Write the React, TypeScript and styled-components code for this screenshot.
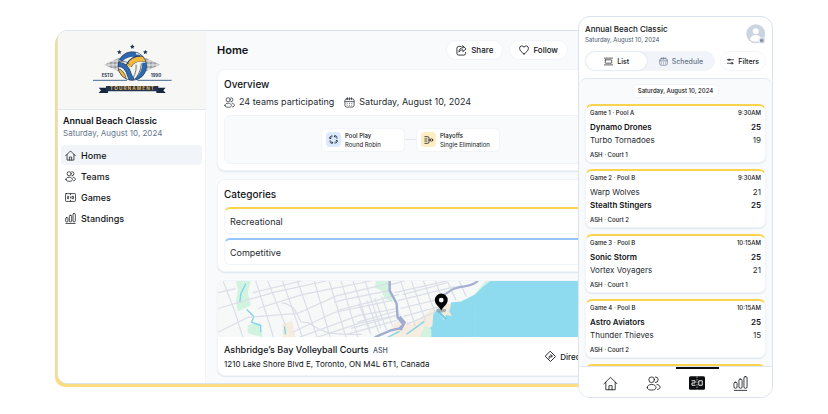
import React from "react";
import styled, { createGlobalStyle, css } from "styled-components";

const color = {
  ink: "#111418",
  body: "#272b30",
  slate: "#64748b",
  line: "#e2e8f0",
  soft: "#f1f5f9",
  canvas: "#f8fafc",
  yellow: "#fcd34d",
  blue: "#93c5fd",
};

const GlobalStyle = createGlobalStyle`
  *, *::before, *::after { box-sizing: border-box; }
  body { margin: 0; background: #fff; color: ${color.ink}; font-family: Inter, sans-serif; }
  h1, h2, h3, p, ul { margin: 0; padding: 0; }
  ul { list-style: none; }
  button { font: inherit; color: inherit; }
  a { color: inherit; text-decoration: none; }
  svg { display: block; flex: none; }
`;

const Stage = styled.div`
  display: flex;
  align-items: stretch;
  min-height: 100vh;
  padding: 16px 55px 16px 57px;
`;

/* ---------- desktop window ---------- */

const Desktop = styled.div`
  display: flex;
  flex: 1;
  min-width: 0;
  margin: 14px -38px 14px 0;
  border: 1px solid #dbe3ee;
  border-radius: 10px;
  background: ${color.canvas};
  box-shadow: -2px 3px 0 #fcdb83;
  overflow: hidden;
`;

const Sidebar = styled.aside`
  flex: 0 0 148px;
  background: #fff;
  border-right: 1px solid ${color.soft};
`;

const LogoPanel = styled.div`
  display: flex;
  justify-content: center;
  align-items: center;
  height: 79px;
  padding-top: 2px;
  background: #f7f7f6;
  border-bottom: 1px solid ${color.line};
`;

const SidebarHeading = styled.div`
  padding: 5px 5px 6px;
`;

const EventName = styled.h1<{ $compact?: boolean }>`
  font-size: ${(p) => (p.$compact ? 8 : 9)}px;
  font-weight: ${(p) => (p.$compact ? 500 : 600)};
  line-height: 12px;
  white-space: nowrap;
`;

const EventDate = styled.p<{ $compact?: boolean }>`
  font-size: ${(p) => (p.$compact ? 6 : 8)}px;
  line-height: ${(p) => (p.$compact ? 10 : 12)}px;
  color: ${(p) => (p.$compact ? "#475569" : color.slate)};
  white-space: nowrap;
`;

const SideList = styled.ul`
  display: grid;
  gap: 1px;
  padding: 0 3px;
`;

const SideLink = styled.a<{ $active?: boolean }>`
  display: flex;
  align-items: center;
  gap: 5px;
  height: 20px;
  padding: 0 4px;
  border-radius: 4px;
  font-size: 9px;
  font-weight: 500;
  background: ${(p) => (p.$active ? color.soft : "transparent")};
`;

const Main = styled.main`
  flex: 1;
  min-width: 0;
  padding: 0 11px 7px;
  display: flex;
  flex-direction: column;
  gap: 8px;
`;

const MainHeader = styled.header`
  display: flex;
  align-items: center;
  gap: 6px;
  height: 38px;
  margin-bottom: -8px;
  padding-right: 36px;
`;

const PageTitle = styled.h2`
  flex: 1;
  font-size: 11px;
  font-weight: 600;
`;

const PillButton = styled.button<{ $small?: boolean }>`
  display: flex;
  align-items: center;
  justify-content: center;
  gap: 4px;
  height: 20px;
  padding: 0 ${(p) => (p.$small ? 6 : 9)}px;
  border: 1px solid ${color.soft};
  border-radius: 10px;
  background: #fff;
  font-size: ${(p) => (p.$small ? 7 : 8)}px;
  font-weight: 500;
`;

const Card = styled.section`
  border: 1px solid ${color.soft};
  border-radius: 8px;
  background: #fff;
  box-shadow: 0 1px 1px #e2e8f0;
  overflow: hidden;
`;

const CardBody = styled.div`
  padding: 6px;
`;

const CardTitle = styled.h3`
  font-size: 10px;
  font-weight: 500;
  line-height: 16px;
`;

const Facts = styled.div`
  display: flex;
  gap: 10px;
  padding: 4px 0 7px;
`;

const Fact = styled.p`
  display: flex;
  align-items: center;
  gap: 4px;
  font-size: 9px;
  line-height: 12px;
  color: ${color.body};
  white-space: nowrap;
`;

const Bracket = styled.div`
  display: flex;
  align-items: center;
  justify-content: center;
  height: 49px;
  border: 1px solid ${color.soft};
  border-radius: 6px;
  background: ${color.canvas};
`;

const Connector = styled.span`
  width: 11px;
  height: 1px;
  background: ${color.line};
`;

const StageBox = styled.div`
  display: flex;
  align-items: center;
  gap: 4px;
  height: 24px;
  min-width: 84px;
  padding: 0 4px;
  border: 1px solid ${color.soft};
  border-radius: 5px;
  background: #fff;
`;

const StageIcon = styled.span<{ $tint: string }>`
  display: grid;
  place-items: center;
  width: 15px;
  height: 15px;
  border-radius: 4px;
  background: ${(p) => p.$tint};
`;

const StageText = styled.p<{ $strong?: boolean }>`
  font-size: 6px;
  line-height: 9px;
  font-weight: ${(p) => (p.$strong ? 500 : 400)};
  white-space: nowrap;
`;

const CategoryList = styled.div`
  display: grid;
  gap: 4px;
  padding-top: 5px;
`;

const Category = styled.a<{ $accent: string }>`
  display: flex;
  align-items: center;
  height: 27px;
  padding: 0 5px;
  border: 1px solid ${color.soft};
  border-top: 2px solid ${(p) => p.$accent};
  border-radius: 6px;
  font-size: 9px;
  color: ${color.body};
`;

const MapFrame = styled.div`
  height: 56px;
  svg { width: 100%; height: 100%; }
`;

const Venue = styled.div`
  display: flex;
  align-items: center;
  justify-content: space-between;
  padding: 6px 4px 5px 6px;
  white-space: nowrap;
`;

const VenueName = styled.h3`
  font-size: 9px;
  font-weight: 500;
  line-height: 14px;
`;

const VenueCode = styled.span`
  margin-left: 2px;
  font-size: 7px;
  color: #475569;
`;

const VenueAddress = styled.p`
  font-size: 8px;
  line-height: 12px;
`;

const Directions = styled.a`
  display: flex;
  align-items: center;
  gap: 4px;
  font-size: 8px;
  font-weight: 500;
`;

/* ---------- phone ---------- */

const Phone = styled.div`
  position: relative;
  z-index: 1;
  display: flex;
  flex-direction: column;
  flex: 0 0 195px;
  height: calc(100vh - 32px);
  border: 1px solid #dbe3ee;
  border-radius: 12px;
  background: #fff;
  overflow: hidden;
`;

const PhoneHeader = styled.header`
  padding: 6px 6px 7px;
`;

const PhoneTop = styled.div`
  display: flex;
  align-items: center;
  justify-content: space-between;
  margin-bottom: 6px;
`;

const Controls = styled.div`
  display: flex;
  gap: 5px;
`;

const Segments = styled.div`
  display: flex;
  flex: 1;
  height: 20px;
  padding: 1px;
  border-radius: 10px;
  background: ${color.soft};
`;

const Segment = styled.button<{ $on?: boolean }>`
  display: flex;
  flex: 1 0 auto;
  align-items: center;
  justify-content: center;
  gap: 4px;
  padding: 0 8px;
  border: 0;
  border-radius: 9px;
  background: transparent;
  color: ${color.slate};
  font-size: 7px;
  font-weight: 500;
  ${(p) =>
    p.$on &&
    css`
      padding: 0 15px;
      background: #fff;
      color: ${color.ink};
      box-shadow: 0 0 2px #cbd5e1;
    `}
`;

const Feed = styled.div`
  display: flex;
  flex: 1;
  min-height: 0;
  flex-direction: column;
  align-items: center;
  gap: 6px;
  padding: 5px 6px 0;
  border-top: 1px solid ${color.line};
  border-radius: 8px 8px 0 0;
  background: ${color.canvas};
  overflow: hidden;
`;

const DayPill = styled.p`
  flex: none;
  padding: 0 5px;
  border: 1px solid ${color.soft};
  border-radius: 6px;
  background: #fff;
  font-size: 6px;
  font-weight: 500;
  line-height: 12px;
`;

const GameCard = styled.article`
  display: grid;
  flex: none;
  gap: 3px;
  width: 100%;
  min-height: 59px;
  padding: 2px 4px;
  border: 1px solid ${color.soft};
  border-top: 2px solid ${color.yellow};
  border-radius: 7px;
  background: #fff;
  box-shadow: 0 1px 1px #e2e8f0;
`;

const GameMeta = styled.p`
  display: flex;
  justify-content: space-between;
  font-size: 6px;
  font-weight: 500;
  line-height: 10px;
`;

const TeamRow = styled.p<{ $winner: boolean }>`
  display: flex;
  justify-content: space-between;
  font-size: 8px;
  line-height: 13px;
  font-weight: ${(p) => (p.$winner ? 600 : 400)};
  color: ${(p) => (p.$winner ? color.ink : color.body)};
`;

const TabBar = styled.nav`
  display: grid;
  grid-template-columns: repeat(4, 1fr);
  height: 31px;
  padding: 0 10px;
  border-top: 1px solid ${color.line};
  background: #fff;
`;

const Tab = styled.a<{ $active?: boolean }>`
  display: grid;
  place-items: center;
  border-top: 2px solid ${(p) => (p.$active ? "#0b0d10" : "transparent")};
`;

/* ---------- icons ---------- */

type IconProps = { size?: number; weight?: number };

const Icon = ({ size = 11, weight = 1.6, children }: IconProps & { children: React.ReactNode }) => (
  <svg width={size} height={size} viewBox="0 0 24 24" fill="none" stroke="currentColor"
    strokeWidth={weight} strokeLinecap="round" strokeLinejoin="round" aria-hidden="true">
    {children}
  </svg>
);

const HomeIcon = (p: IconProps) => (
  <Icon {...p}><path d="M1.5 12.500 12 2l10.500 10.500M4.500 10v12h15V10M9.500 22v-6.500h5V22" /></Icon>
);
const TeamsIcon = (p: IconProps) => (
  <Icon {...p}>
    <circle cx="9" cy="6" r="4.500" />
    <path d="M15 1.500a4.500 4.500 0 0 1 0 9M2 18.500c0-3 3-5 7-5s7 2 7 5-3 4-7 4-7-1-7-4ZM17.500 13.500c3 .5 5 2 5 4.500s-1.500 3-4 3.500" />
  </Icon>
);
const ScoreIcon = (p: IconProps) => (
  <Icon {...p}>
    <rect x="1" y="3.500" width="22" height="17" rx="1.500" />
    <path d="M12 4v2M12 11v2M12 18v2M5.500 9.500H8V12H5.500v2.500H8M16 9.500h2.500v5H16Z" />
  </Icon>
);
const ScoreSolidIcon = () => (
  <svg width="16" height="14" viewBox="0 0 32 28" fill="none" stroke="#fff" strokeWidth="1.800" aria-hidden="true">
    <rect width="32" height="27" y=".5" rx="3" fill="#0b0d10" stroke="none" />
    <path d="M5 9.500h7v4.500H6v4.500h7M19.500 9.500h7v9h-7Z" />
    <path d="M16 1v26" strokeDasharray="3 2" strokeWidth="1.200" />
  </svg>
);
const BarsIcon = (p: IconProps) => (
  <Icon {...p}>
    <rect x="1.500" y="10" width="5" height="9.500" rx="2" />
    <rect x="9.500" y="5" width="5" height="14.500" rx="2" />
    <rect x="17.500" y="1" width="5" height="18.500" rx="2" />
    <path d="M2 23h20" />
  </Icon>
);
const CalendarIcon = (p: IconProps) => (
  <Icon {...p}>
    <rect x="2" y="4" width="20" height="18" rx="4" />
    <path d="M2 10h20M7.500 1.500V6M12 1.500V6M16.500 1.500V6M7 14h.1M12 14h.1M17 14h.1M7 18h.1M12 18h.1M17 18h.1" />
  </Icon>
);
const ShareIcon = () => (
  <Icon size={11} weight={1.800}>
    <path d="M11 3H6a4 4 0 0 0-4 4v11a4 4 0 0 0 4 4h11a4 4 0 0 0 4-4v-2" />
    <path d="M15 2l7 6.500-7 6v-4c-4 0-6.500 1-8.500 5 0-6 3-9.500 8.500-9.500Z" />
  </Icon>
);
const HeartIcon = () => (
  <Icon size={10} weight={2}>
    <path d="M12 21.500C6 17 1.500 13 1.500 8.500a5.500 5.500 0 0 1 10.500-3 5.500 5.500 0 0 1 10.500 3C22.500 13 18 17 12 21.500Z" />
  </Icon>
);
const PoolIcon = () => (
  <Icon size={9} weight={2}>
    <path d="M3 9V6a3 3 0 0 1 3-3h3M15 3h3a3 3 0 0 1 3 3v3M21 15v3a3 3 0 0 1-3 3h-3M9 21H6a3 3 0 0 1-3-3v-3M1 7l2 3 3-2M17 1l-3 2 2 3M23 17l-2-3-3 2M7 23l3-2-2-3" />
  </Icon>
);
const PlayoffIcon = () => (
  <Icon size={10} weight={1.800}>
    <path d="M2 4h7a3 3 0 0 1 3 3v10a3 3 0 0 1-3 3H2M2 9.500h5M2 14.500h5M12 12h3" />
    <circle cx="18" cy="12" r="3" />
  </Icon>
);
const DirectionsIcon = () => (
  <Icon size={11} weight={2}>
    <path d="m12 1 11 11-11 11L1 12ZM9 16v-3a2 2 0 0 1 2-2h4M13 8l3 3-3 3" />
  </Icon>
);
const ListIcon = () => (
  <Icon size={9} weight={1.800}>
    <path d="M1 3h22M1 21h22" /><rect x="3.500" y="7.500" width="17" height="9" rx="1" />
  </Icon>
);
const FiltersIcon = () => (
  <Icon size={7} weight={2.400}>
    <path d="M10 6h13M1 18h13M1 6h3" /><circle cx="7" cy="6" r="3" /><circle cx="17" cy="18" r="3" />
  </Icon>
);

const Avatar = () => (
  <svg width="20" height="20" viewBox="0 0 40 40" role="img" aria-label="Profile">
    <circle cx="19.500" cy="19.500" r="19" fill="#cbd5e1" />
    <circle cx="19.500" cy="14.500" r="6" fill="#fff" />
    <path d="M8 31c1-6 5-9 11.500-9S30 25 31 31c-6 6-17 6-23 0Z" fill="#fff" />
    <rect x="25" y="27" width="13" height="12" rx="3" fill="#e2e8f0" />
    <path d="M28 30.500h7M28 33h7M28 35.500h7" stroke="#64748b" strokeWidth="1.600" />
  </svg>
);

const star = "m0-7 2 4.600 5 .5-3.700 3.400 1.100 4.900L0 4-4.400 6.400l1.100-4.900L-7-1.900l5-.5Z";

const Logo = () => (
  <svg width="92" height="66" viewBox="0 0 276 198" role="img" aria-label="Tournament crest">
    <defs>
      <pattern id="mesh" width="4" height="4" patternUnits="userSpaceOnUse">
        <rect width="3" height="2.500" fill="#777b82" />
      </pattern>
      <clipPath id="ball"><circle cx="139" cy="84" r="43" /></clipPath>
    </defs>
    <g fill="#1f3350">
      <path d={star} transform="translate(100 42)" />
      <path d={star} transform="translate(139 26)" />
      <path d={star} transform="translate(178 42)" />
    </g>
    <path d="M54 80 104 57v46ZM223 80l-50-23v46Z" fill="url(#mesh)" />
    <g clipPath="url(#ball)">
      <circle cx="139" cy="84" r="43" fill="#f5f2e9" />
      <g fill="none" strokeLinecap="butt">
        <path d="M101 66c14-17 38-24 62-12" stroke="#2f69ad" strokeWidth="17" />
        <path d="M150 45c14 1 24 7 31 18" stroke="#f5f2e9" strokeWidth="8" />
        <path d="M128 84c8-18 28-25 54-21" stroke="#22385c" strokeWidth="18" />
        <path d="M128 85c8-18 28-25 54-21" stroke="#f2b83f" strokeWidth="14" />
        <path d="M176 74c1 20-7 38-24 54" stroke="#2f69ad" strokeWidth="15" />
        <path d="M166 76c-1 20-9 36-24 54" stroke="#22385c" strokeWidth="2" />
        <path d="M150 80c2 16-3 32-13 46" stroke="#22385c" strokeWidth="2" />
        <path d="M94 80c22-3 31 14 36 30 2 8 5 12 10 18" stroke="#22385c" strokeWidth="15" />
        <path d="M94 80c22-3 31 14 36 30 2 8 5 12 10 18" stroke="#2f69ad" strokeWidth="12" />
        <path d="M94 98c10 3 16 9 21 26" stroke="#22385c" strokeWidth="15" />
        <path d="M94 98c10 3 16 9 21 26" stroke="#f2b83f" strokeWidth="12" />
        <path d="M98 71c10-3 22-2 32 8" stroke="#22385c" strokeWidth="2" />
      </g>
    </g>
    <circle cx="139" cy="84" r="43" fill="none" stroke="#22385c" strokeWidth="2" />
    <path d="M21 127h102M154 127h103" stroke="#274e7f" strokeWidth="2.500" />
    <g fontFamily="Inter, sans-serif" fontWeight="700" fontSize="13" fill="#253650">
      <text x="47" y="117">ESTD</text>
      <text x="194" y="117">1990</text>
    </g>
    <path d="M38 149h28v16H38l7-8ZM239 149h-28v16h28l-7-8Z" fill="#18283f" />
    <path d="M60 144h157v16H60Z" fill="#22344f" />
    <text x="138" y="157" textAnchor="middle" fontFamily="Inter, sans-serif" fontWeight="700" fontSize="14" fill="#e5b654">T O U R N A M E N T</text>
  </svg>
);

const VenueMap = () => (
  <svg viewBox="0 0 388 57" preserveAspectRatio="xMidYMid slice" role="img" aria-label="Map of the venue area">
    <rect width="388" height="57" fill="#f7f8f8" />
    <g fill="#d2f3e0">
      <path d="M18 0h15l-3 12 3 13-13 6-2-10 2-12ZM30 45l12-3 3 15-15-4Z" />
      <path d="M159 0h14l3 22-8-4-3-8-7-3ZM270 0h10l-17 24-8-6Z" />
    </g>
    <path d="m65 43 10-2 3 16H65ZM178 42l10-2 7 4 24-18 8 4-10 16-8 11h-35Z" fill="#f6ece0" />
    <path d="M28 3 23 13l-1 9M29 29l7 7-2 6 9 3v7M67 46l1 8M171 57l12-6M190 54l18-13" fill="none" stroke="#7fd4eb" strokeWidth="1.400" />
    <g fill="none" stroke="#dadee7" strokeWidth="1.200">
      <path d="M0 28 55 12 110 0M0 52l30-15 50-4 40-18 52-12M0 12l18-4M35 12l50-12M40 28l45-14 70-14M75 52l42-20 58-12M82 57l60-22 39-7M100 57l42-14 42-9" />
      <path d="m5 0 12 31 8 26M38 0l18 57M50 0l18 45M65 0l20 57M80 0l20 57M97 0l16 57M112 0l17 57M124 0l17 57M136 0l17 50M148 0l16 48" />
      <path d="m117 22 10-3 45-9M120 30l62-16M85 42c15-2 5 14 60 12M64 22c12 2 14 8 20 20" />
      <path d="m130 54 50-14M134 48l46-13M140 42l42-12M150 20l12 32M158 18l12 32M165 16l11 30M142 23l12 31" />
      <path d="m174 4 88-24M178 12l72-16M181 20l58-14M184 28l45-11M187 36l40-11M190 44l28-12M184 0l15 46M195 0l14 40M207 0l12 33M219 0l10 27M231 0l9 20M243 0l7 16M186 14l45-12" />
    </g>
    <path d="M173 0v10l7 13 1 14 6 7-4 4-9 2-16 7M183 36l5 6-4 8" fill="none" stroke="#9fabcf" strokeWidth="2.400" />
    <path d="M262 0c-8 8-18 4-26 9l-11 7" fill="none" stroke="#a5b0d2" strokeWidth="2.200" />
    <path d="M275 0h113v57H205l4-7 7-4 1-12 6-8 8 6 4-10 10-1 14-7 8-8Z" fill="#8edaef" />
    <path d="m203 57 6-12 6 4v8Z" fill="#d2f3e0" />
    <path d="m221 31 7 9 2-6 6 2-3-5 2-7-9-2Z" fill="#f3ead8" />
    <path d="m222 31 8 8" stroke="#62cdea" strokeWidth="2" />
    <path d="M259 20v37" stroke="#a6e1f0" strokeDasharray="1 2" />
    <ellipse cx="225" cy="30" rx="5" ry="2" fill="#79899a" opacity=".6" />
    <path d="M225 30c-2-4-6.500-6-6.500-10.500a6.500 6.500 0 0 1 13 0C231.500 24 227 26 225 30Z" fill="#050607" />
    <circle cx="225" cy="19.500" r="2.400" fill="#fff" />
  </svg>
);

/* ---------- data ---------- */

const sideItems = [
  { label: "Home", icon: HomeIcon, active: true },
  { label: "Teams", icon: TeamsIcon },
  { label: "Games", icon: ScoreIcon },
  { label: "Standings", icon: BarsIcon },
];

const games = [
  { title: "Game 1 · Pool A", time: "9:30AM", teams: [["Dynamo Drones", 25], ["Turbo Tornadoes", 19]], court: "ASH · Court 1" },
  { title: "Game 2 · Pool B", time: "9:30AM", teams: [["Warp Wolves", 21], ["Stealth Stingers", 25]], court: "ASH · Court 2" },
  { title: "Game 3 · Pool B", time: "10:15AM", teams: [["Sonic Storm", 25], ["Vortex Voyagers", 21]], court: "ASH · Court 1" },
  { title: "Game 4 · Pool B", time: "10:15AM", teams: [["Astro Aviators", 25], ["Thunder Thieves", 15]], court: "ASH · Court 2" },
];

const DesktopWindow = () => (
  <Desktop>
    <Sidebar>
      <LogoPanel><Logo /></LogoPanel>
      <SidebarHeading>
        <EventName>Annual Beach Classic</EventName>
        <EventDate>Saturday, August 10, 2024</EventDate>
      </SidebarHeading>
      <nav>
        <SideList>
          {sideItems.map(({ label, icon: Glyph, active }) => (
            <li key={label}>
              <SideLink href="#" $active={active}><Glyph />{label}</SideLink>
            </li>
          ))}
        </SideList>
      </nav>
    </Sidebar>
    <Main>
      <MainHeader>
        <PageTitle>Home</PageTitle>
        <PillButton><ShareIcon />Share</PillButton>
        <PillButton><HeartIcon />Follow</PillButton>
      </MainHeader>
      <Card>
        <CardBody>
          <CardTitle>Overview</CardTitle>
          <Facts>
            <Fact><TeamsIcon />24 teams participating</Fact>
            <Fact><CalendarIcon />Saturday, August 10, 2024</Fact>
          </Facts>
          <Bracket>
            <StageBox>
              <StageIcon $tint="#dbeafe"><PoolIcon /></StageIcon>
              <div><StageText $strong>Pool Play</StageText><StageText>Round Robin</StageText></div>
            </StageBox>
            <Connector />
            <StageBox>
              <StageIcon $tint="#feedc3"><PlayoffIcon /></StageIcon>
              <div><StageText $strong>Playoffs</StageText><StageText>Single Elimination</StageText></div>
            </StageBox>
          </Bracket>
        </CardBody>
      </Card>
      <Card>
        <CardBody>
          <CardTitle>Categories</CardTitle>
          <CategoryList>
            <Category href="#" $accent={color.yellow}>Recreational</Category>
            <Category href="#" $accent={color.blue}>Competitive</Category>
          </CategoryList>
        </CardBody>
      </Card>
      <Card>
        <MapFrame><VenueMap /></MapFrame>
        <Venue>
          <div>
            <VenueName>Ashbridge’s Bay Volleyball Courts <VenueCode>ASH</VenueCode></VenueName>
            <VenueAddress>1210 Lake Shore Blvd E, Toronto, ON M4L 6T1, Canada</VenueAddress>
          </div>
          <Directions href="#"><DirectionsIcon />Directions</Directions>
        </Venue>
      </Card>
    </Main>
  </Desktop>
);

const PhoneWindow = () => (
  <Phone>
    <PhoneHeader>
      <PhoneTop>
        <div>
          <EventName $compact>Annual Beach Classic</EventName>
          <EventDate $compact>Saturday, August 10, 2024</EventDate>
        </div>
        <Avatar />
      </PhoneTop>
      <Controls>
        <Segments>
          <Segment $on><ListIcon />List</Segment>
          <Segment><CalendarIcon size={9} weight={1.800} />Schedule</Segment>
        </Segments>
        <PillButton $small><FiltersIcon />Filters</PillButton>
      </Controls>
    </PhoneHeader>
    <Feed>
      <DayPill>Saturday, August 10, 2024</DayPill>
      {games.map((g) => (
        <GameCard key={g.title}>
          <GameMeta><span>{g.title}</span><span>{g.time}</span></GameMeta>
          <div>
            {g.teams.map(([name, score]) => (
              <TeamRow key={name} $winner={score === 25}><span>{name}</span><span>{score}</span></TeamRow>
            ))}
          </div>
          <GameMeta>{g.court}</GameMeta>
        </GameCard>
      ))}
      <GameCard aria-hidden="true" />
    </Feed>
    <TabBar>
      <Tab href="#" aria-label="Home"><HomeIcon size={15} weight={1.300} /></Tab>
      <Tab href="#" aria-label="Teams"><TeamsIcon size={15} weight={1.300} /></Tab>
      <Tab href="#" aria-label="Games" $active><ScoreSolidIcon /></Tab>
      <Tab href="#" aria-label="Standings"><BarsIcon size={15} weight={1.300} /></Tab>
    </TabBar>
  </Phone>
);

export default function App() {
  return (
    <>
      <GlobalStyle />
      <Stage>
        <DesktopWindow />
        <PhoneWindow />
      </Stage>
    </>
  );
}
